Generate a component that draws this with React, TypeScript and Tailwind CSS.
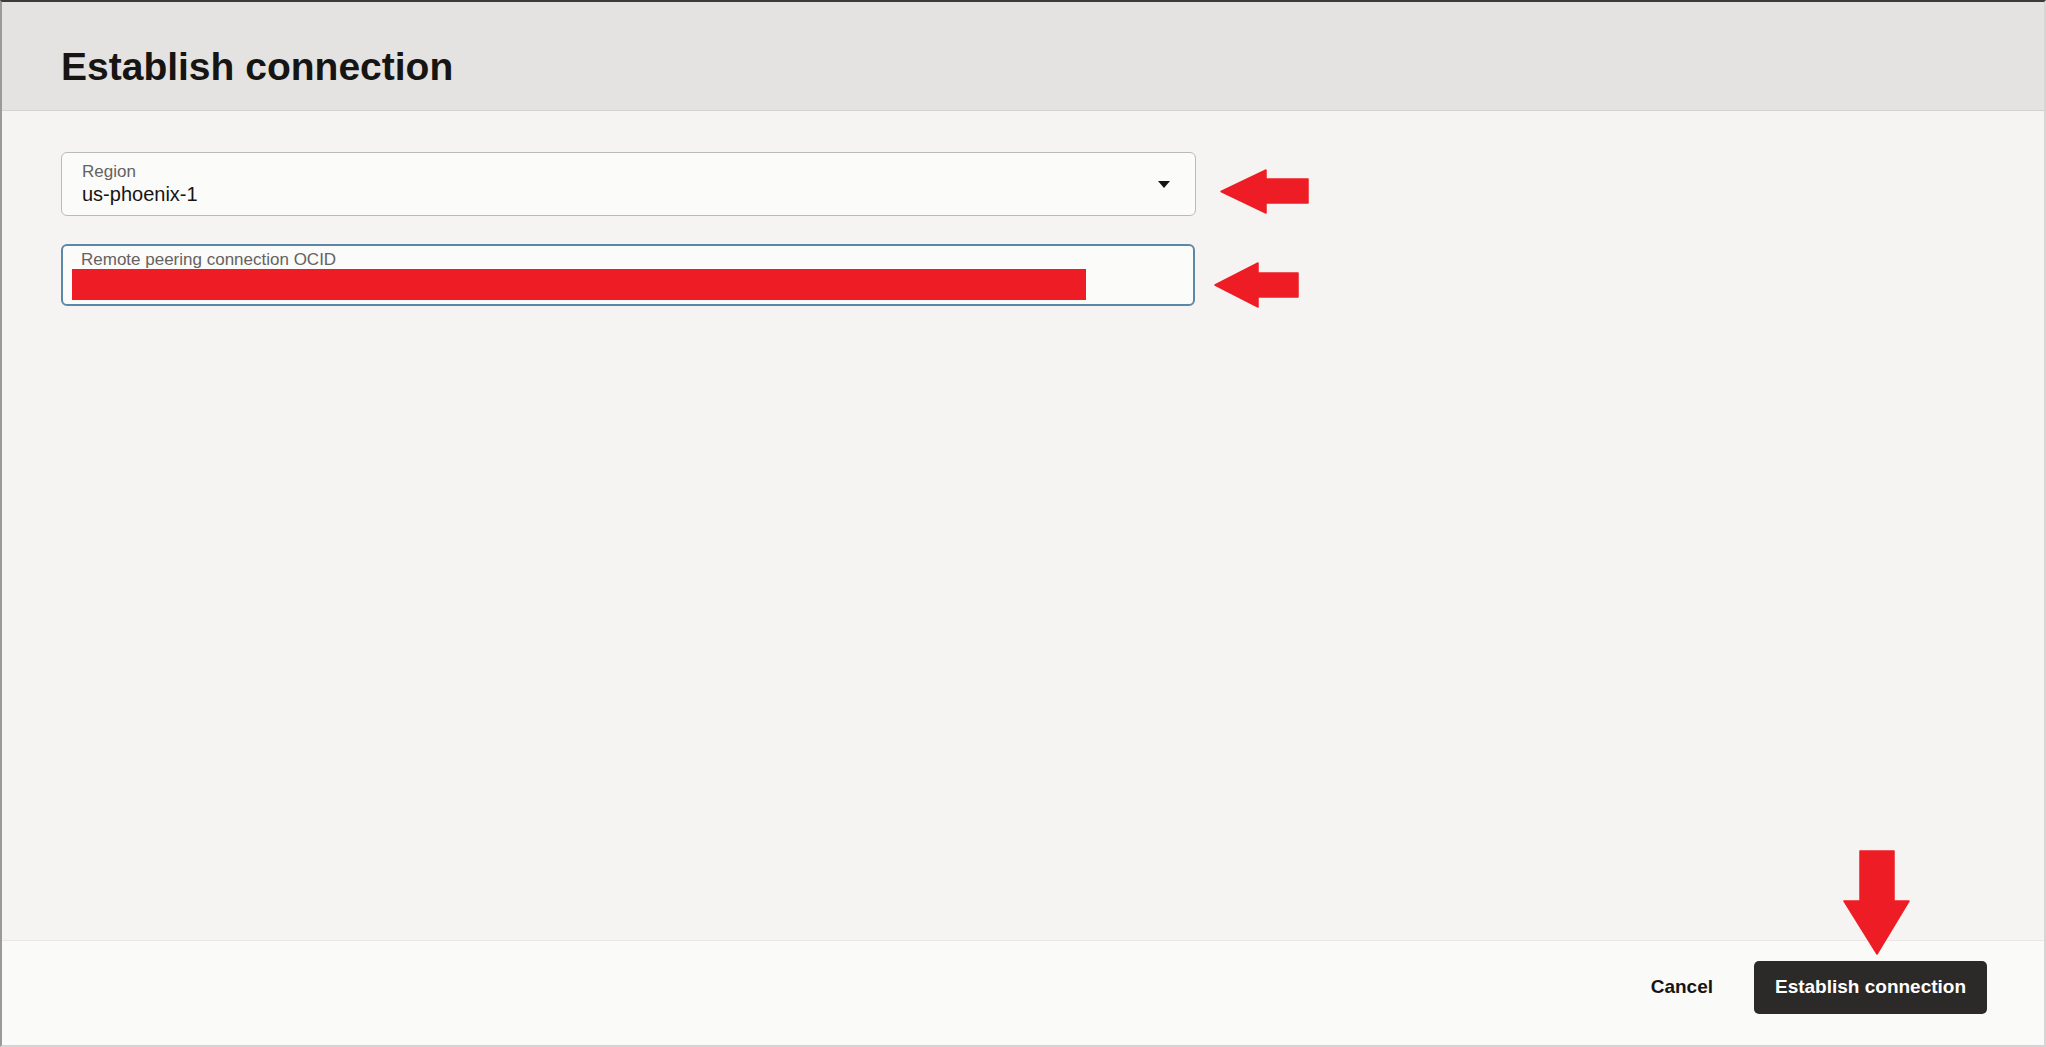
import React from "react";

const font = { fontFamily: '"Liberation Sans", Arial, sans-serif' };

function LeftArrow({ w, h, head, shaftTop, shaftBottom }: {
  w: number; h: number; head: number; shaftTop: number; shaftBottom: number;
}) {
  const mid = h / 2;
  return (
    <svg width={w + 2} height={h + 2} viewBox={`-1 -1 ${w + 2} ${h + 2}`}>
      <polygon
        points={`0,${mid} ${head},0 ${head},${shaftTop} ${w},${shaftTop} ${w},${shaftBottom} ${head},${shaftBottom} ${head},${h}`}
        fill="#ee1c25"
        stroke="#ee1c25"
        strokeWidth={1.5}
        strokeLinejoin="round"
      />
    </svg>
  );
}

function DownArrow() {
  return (
    <svg width={67} height={105} viewBox="-1 -1 67 105">
      <polygon
        points="16,0 50,0 50,50 65,50 33,103 0,50 16,50"
        fill="#ee1c25"
        stroke="#ee1c25"
        strokeWidth={1.5}
        strokeLinejoin="round"
      />
    </svg>
  );
}

export default function App() {
  return (
    <div
      style={font}
      className="relative flex h-[1047px] w-full flex-col overflow-hidden border-t-2 border-l-2 border-r-2 border-b-2 border-t-[#3b3b3b] border-l-[#9a9a9a] border-r-[#d6d6d6] border-b-[#d4d4d4] bg-[#f5f4f2]"
    >
      {/* Header */}
      <div className="h-[109px] shrink-0 border-b border-[#d3d2d0] bg-[#e4e3e1] pl-[59px] pt-[36px]">
        <h1 className="text-[39px] font-bold leading-normal text-[#161513]">Establish connection</h1>
      </div>

      {/* Form body */}
      <div className="flex flex-1 flex-col gap-[28px] pl-[59px] pt-[41px]">
        <div className="relative w-[1135px]">
          <div className="flex h-[64px] items-center justify-between rounded-[6px] border border-[#bcbab7] bg-[#fbfbfa] pl-[20px] pr-[25px]">
            <div className="flex flex-col">
              <span className="text-[17px] leading-[20px] text-[#65625f]">Region</span>
              <span className="text-[20px] leading-[24px] text-[#161513]">us-phoenix-1</span>
            </div>
            <svg width="12" height="7" viewBox="0 0 12 7">
              <polygon points="0,0 12,0 6,7" fill="#161513" />
            </svg>
          </div>
          <div className="absolute left-[1159px] top-[17px]">
            <LeftArrow w={87} h={43} head={45} shaftTop={9} shaftBottom={33} />
          </div>
        </div>

        <div className="relative w-[1134px]">
          <div className="flex h-[62px] flex-col rounded-[6px] border-2 border-[#5d87a7] bg-[#fbfbfa] pt-[4px]">
            <span className="pl-[18px] text-[17px] leading-[19px] text-[#65625f]">Remote peering connection OCID</span>
            <div className="ml-[9px] h-[31px] w-[1014px] bg-[#ee1c25]" />
          </div>
          <div className="absolute left-[1153px] top-[18px]">
            <LeftArrow w={83} h={44} head={43} shaftTop={10} shaftBottom={34} />
          </div>
        </div>
      </div>

      {/* Footer */}
      <div className="flex h-[105px] shrink-0 items-start justify-end border-t border-[#e8e7e5] bg-[#fafaf9] pr-[57px] pt-[20px]">
        <button className="mr-[41px] flex h-[53px] items-center text-[19px] font-bold text-[#161513]">Cancel</button>
        <button className="flex h-[53px] w-[233px] items-center justify-center rounded-[5px] bg-[#2c2a28] text-[19px] font-bold text-white">
          Establish connection
        </button>
      </div>

      {/* Annotation arrow over the primary action */}
      <div className="absolute left-[1841px] top-[848px]">
        <DownArrow />
      </div>
    </div>
  );
}
